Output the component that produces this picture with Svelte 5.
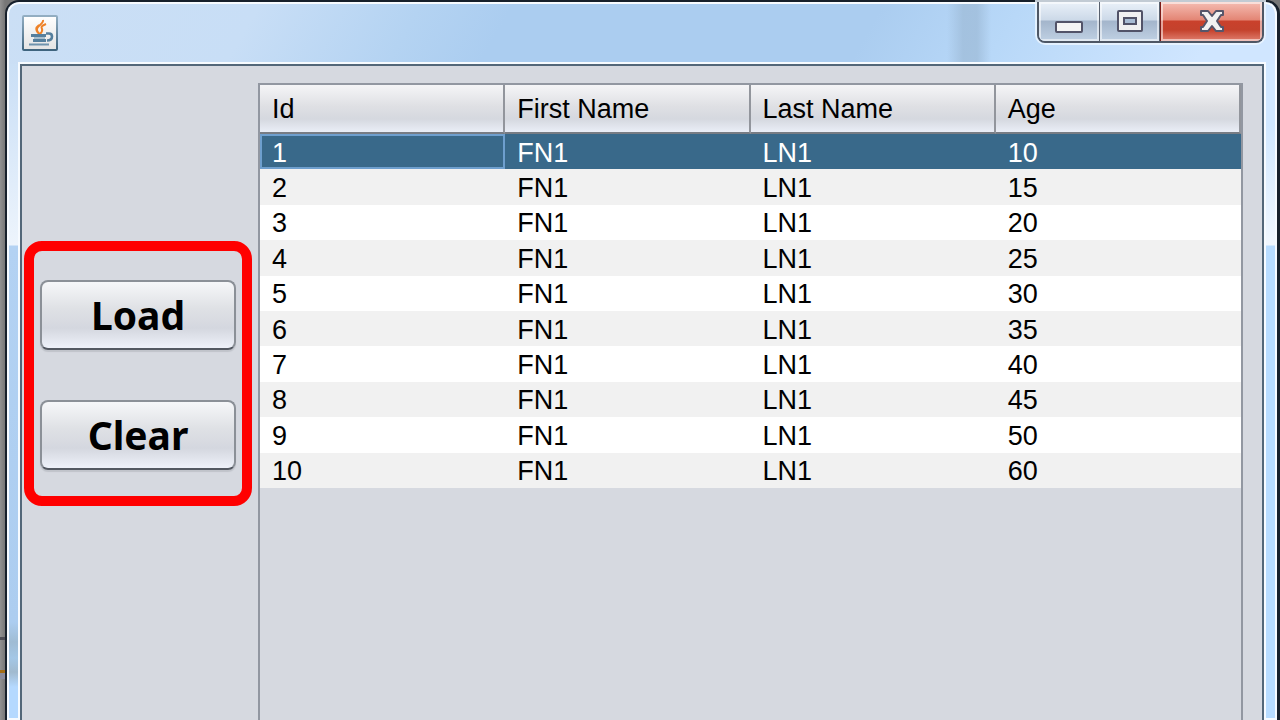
<script lang="ts">
  type Person = { id: number; firstName: string; lastName: string; age: number };

  const ages = [10, 15, 20, 25, 30, 35, 40, 45, 50, 60];
  const columns = ["Id", "First Name", "Last Name", "Age"];

  function loadPeople(): Person[] {
    return ages.map((age, i) => ({ id: i + 1, firstName: "FN1", lastName: "LN1", age }));
  }

  let people = $state(loadPeople());
  let selected = $state(1);
</script>

<div class="desktop">
  <div class="window">
    <header class="titlebar">
      <svg class="app-icon" width="36" height="36" viewBox="0 0 36 36" aria-hidden="true">
        <defs>
          <linearGradient id="tile" x1="0" y1="0" x2="0" y2="1">
            <stop offset="0" stop-color="#ffffff" />
            <stop offset="1" stop-color="#e3e3e3" />
          </linearGradient>
          <linearGradient id="rim" x1="0" y1="0" x2="0" y2="1">
            <stop offset="0" stop-color="#93aec2" />
            <stop offset="1" stop-color="#3f647e" />
          </linearGradient>
        </defs>
        <rect x="1" y="1" width="34" height="34" rx="1" fill="url(#tile)" stroke="url(#rim)" stroke-width="2" />
        <path d="M21 5c1 4-7 6-6 10 0 2 2 3 3 5M24 9c-5 2-5 3-4 5 1 2 0 3-2 5M17 10c-4 3-3 5-1 8" fill="none" stroke="#ee8126" stroke-width="2" />
        <path d="M9 20.500h15M11 25.500h13" stroke="#557f9d" stroke-width="3" />
        <path d="M12 23h11" stroke="#a9bfce" stroke-width="2" />
        <path d="M24 18.500h3c3 0 3 2 3 3 0 3-2 4-5 4" fill="none" stroke="#557f9d" stroke-width="2.600" />
        <path d="M7 29.500h20" stroke="#6f93ad" stroke-width="2" />
      </svg>
      <div class="controls">
        <button class="minimize" aria-label="Minimize">
          <svg width="28" height="12" viewBox="0 0 28 12" aria-hidden="true">
            <rect x="1" y="1" width="26" height="10" rx="1" fill="#f4f4f4" stroke="#525368" stroke-width="2" />
          </svg>
        </button>
        <button class="maximize" aria-label="Maximize">
          <svg width="28" height="22" viewBox="0 0 28 22" aria-hidden="true">
            <rect x="2" y="1" width="24" height="20" rx="1" fill="#f1f1f1" stroke="#525368" stroke-width="2" />
            <rect x="8" y="8" width="12" height="6" fill="#a9bdd4" stroke="#525368" stroke-width="2" />
          </svg>
        </button>
        <button class="close" aria-label="Close">
          <svg width="26" height="22" viewBox="0 0 26 22" aria-hidden="true">
            <path d="M2 1h7l4 5 4-5h7v4h-2l-4 6 4 6h2v4h-7l-4-5-4 5H2v-4h2l4-6-4-6H2z" fill="#f2f2f2" stroke="#56566b" stroke-width="2" stroke-linejoin="round" />
          </svg>
        </button>
      </div>
    </header>

    <main class="client">
      <aside>
        <div class="actions">
          <button onclick={() => (people = loadPeople())}>Load</button>
          <button onclick={() => (people = [])}>Clear</button>
        </div>
      </aside>

      <section class="table-pane">
        <table class:filled={people.length > 0}>
          <thead>
            <tr>
              {#each columns as column}
                <th scope="col">{column}</th>
              {/each}
            </tr>
          </thead>
          <tbody>
            {#each people as person (person.id)}
              <tr class:selected={person.id === selected} onclick={() => (selected = person.id)}>
                <td>{person.id}</td>
                <td>{person.firstName}</td>
                <td>{person.lastName}</td>
                <td>{person.age}</td>
              </tr>
            {/each}
          </tbody>
        </table>
      </section>
    </main>
  </div>
</div>

<style>
  :global(body) {
    overflow: hidden;
  }

  .desktop {
    display: flex;
    box-sizing: border-box;
    height: 100vh;
    padding: 0 0 0 5px;
    background:
      linear-gradient(transparent 637px, #4c4c55 637px 640px, transparent 640px 670px, #a36c15 670px 673px, #8a8a9a 673px 679px, transparent 679px) left / 5px 100% no-repeat,
      linear-gradient(90deg, #929292, #777 5px, #777 100%);
    font-family: "Liberation Sans", Arial, sans-serif;
  }

  .window {
    display: flex;
    flex: 1;
    flex-direction: column;
    box-sizing: border-box;
    min-width: 0;
    border: 2px solid #17202b;
    border-right-width: 3px;
    border-bottom: 0;
    border-radius: 14px 14px 0 0;
    padding: 0 13px;
    background:
      linear-gradient(90deg, transparent 940px, #9bb8d4aa 956px 970px, transparent 984px) top / 100% 63px no-repeat,
      linear-gradient(#cbe0f6 0, #cfe2f7 30px, #edf4fc 181px, #b3d2f3 182px, #accdf0 558px, #9fbcd4 578px, #a4c7e6 594px, #a1bacf 608px, #b5d9ff 623px) left 62px / 14px 100% no-repeat,
      linear-gradient(#d0e7ff 0, #d0e7ff 60px, #f1f7fe 181px, #b8dcff 182px) right 62px / 14px 100% no-repeat,
      linear-gradient(120deg, #cbdff5 0, #c8def6 220px, #b4d3f2 360px, #abcdf0 440px, #abcdf0 760px, #b8d8f8 880px, #d0e6ff 1060px);
    box-shadow: inset 0 0 0 2px #f7fbff;
  }

  .titlebar {
    display: flex;
    justify-content: space-between;
    height: 62px;
    padding: 0 0 0 2px;
  }

  .app-icon {
    margin-top: 13px;
  }

  .controls {
    display: flex;
    align-items: flex-start;
    box-sizing: border-box;
    height: 41px;
    overflow: hidden;
    border: 2px solid #4e5765;
    border-top: 0;
    border-radius: 0 0 8px 8px;
    box-shadow: 0 0 0 2px #eef6ffcc;
  }

  .controls button {
    display: flex;
    justify-content: center;
    box-sizing: border-box;
    width: 61px;
    height: 39px;
    border: 0;
    border-right: 1px solid #58616f;
    padding: 0;
    background: linear-gradient(#eaf1f9, #ccd9e8 18px, #a3b5cb 19px, #becfe2 38px);
    box-shadow: inset 0 0 0 2px #ffffff88;
  }

  .controls .minimize {
    padding-top: 19px;
  }

  .controls .maximize {
    width: 60px;
    padding-top: 8px;
  }

  .controls .close {
    width: 102px;
    border-right: 0;
    border-left: 1px solid #7d1c18;
    padding-top: 8px;
    background: linear-gradient(#f5bdb3, #e38574 18px, #c9412c 19px, #c4422d 28px, #dd7969 38px);
  }

  .client {
    display: flex;
    flex: 1;
    min-height: 0;
    border: 2px solid #536779;
    border-bottom: 0;
    background: #d6d9e0;
    box-shadow: 0 0 0 2px #f7fbff;
  }

  aside {
    flex: none;
    width: 236px;
  }

  .actions {
    display: grid;
    gap: 50px;
    margin: 175px 6px 0 2px;
    border: 10px solid #f00;
    border-radius: 18px;
    padding: 29px 6px 26px;
  }

  .actions button {
    height: 70px;
    border: 2px solid #8b9097;
    border-bottom-color: #535861;
    border-radius: 8px;
    padding: 0 0 2px;
    background: linear-gradient(#f6f7f9, #dfe1e5 40%, #d4d7df 70%, #eef1f9);
    box-shadow: 0 2px 1px #c0c3ca;
    color: #000;
    font: bold 39px "Noto Sans", Tahoma, sans-serif;
  }

  .table-pane {
    flex: 1;
    min-width: 0;
    margin: 17px 19px 0 0;
    border: 2px solid #9297a1;
    border-bottom: 0;
  }

  table {
    width: 100%;
    table-layout: fixed;
    border-spacing: 0;
    font-size: 27px;
    line-height: 32px;
  }

  table.filled {
    height: 403px;
  }

  th,
  td {
    padding: 0 0 0 12px;
    text-align: left;
  }

  th {
    box-sizing: border-box;
    height: 49px;
    border-right: 2px solid #92959c;
    border-bottom: 2px solid #777c84;
    background: linear-gradient(#f5f5f7, #dfe0e4 45%, #d5d8df 72%, #eaeef7);
    font-weight: normal;
  }

  td {
    padding-top: 2px;
  }

  tbody tr {
    background: #fff;
  }

  tbody tr:nth-child(even) {
    background: #f1f1f1;
  }

  tbody tr.selected {
    background: #39698a;
    color: #fff;
  }

  .selected td:first-child {
    box-shadow: inset 0 0 0 2px #6e9fce;
  }
</style>
